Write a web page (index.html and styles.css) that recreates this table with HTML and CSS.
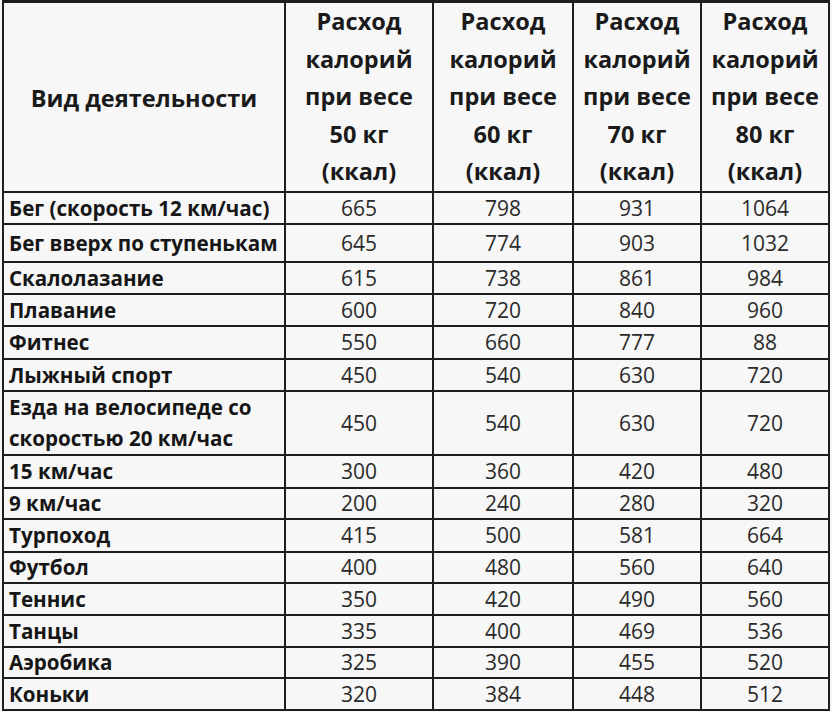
FILE: index.html
```html
<!DOCTYPE html>
<html lang="ru">
<head>
<meta charset="utf-8">
<link rel="stylesheet" href="styles.css">
<title>Расход калорий</title>
</head>
<body>
<table class="kcal">
  <colgroup>
    <col class="c-act">
    <col class="c-50">
    <col class="c-60">
    <col class="c-70">
    <col class="c-80">
  </colgroup>
  <thead>
    <tr class="head">
      <th class="h-act">Вид деятельности</th>
      <th>Расход<br>калорий<br>при весе<br>50 кг<br>(ккал)</th>
      <th>Расход<br>калорий<br>при весе<br>60 кг<br>(ккал)</th>
      <th>Расход<br>калорий<br>при весе<br>70 кг<br>(ккал)</th>
      <th>Расход<br>калорий<br>при весе<br>80 кг<br>(ккал)</th>
    </tr>
  </thead>
  <tbody>
    <tr class="r32"><td class="act">Бег (скорость 12 км/час)</td><td>665</td><td>798</td><td>931</td><td>1064</td></tr>
    <tr class="r38"><td class="act">Бег вверх по ступенькам</td><td>645</td><td>774</td><td>903</td><td>1032</td></tr>
    <tr class="r32"><td class="act">Скалолазание</td><td>615</td><td>738</td><td>861</td><td>984</td></tr>
    <tr class="r32"><td class="act">Плавание</td><td>600</td><td>720</td><td>840</td><td>960</td></tr>
    <tr class="r33"><td class="act">Фитнес</td><td>550</td><td>660</td><td>777</td><td>88</td></tr>
    <tr class="r32"><td class="act">Лыжный спорт</td><td>450</td><td>540</td><td>630</td><td>720</td></tr>
    <tr class="r63"><td class="act">Езда на велосипеде со<br>скоростью 20 км/час</td><td>450</td><td>540</td><td>630</td><td>720</td></tr>
    <tr class="r33"><td class="act">15 км/час</td><td>300</td><td>360</td><td>420</td><td>480</td></tr>
    <tr class="r31"><td class="act">9 км/час</td><td>200</td><td>240</td><td>280</td><td>320</td></tr>
    <tr class="r33"><td class="act">Турпоход</td><td>415</td><td>500</td><td>581</td><td>664</td></tr>
    <tr class="r31"><td class="act">Футбол</td><td>400</td><td>480</td><td>560</td><td>640</td></tr>
    <tr class="r32"><td class="act">Теннис</td><td>350</td><td>420</td><td>490</td><td>560</td></tr>
    <tr class="r32"><td class="act">Танцы</td><td>335</td><td>400</td><td>469</td><td>536</td></tr>
    <tr class="r31"><td class="act">Аэробика</td><td>325</td><td>390</td><td>455</td><td>520</td></tr>
    <tr class="r32"><td class="act">Коньки</td><td>320</td><td>384</td><td>448</td><td>512</td></tr>
  </tbody>
</table>
</body>
</html>
```

FILE: styles.css
```css
html, body {
  margin: 0;
  padding: 0;
  background: #f7f7f7;
}

body {
  padding: 0 0 0 2px;
  overflow: hidden;
  height: 712px;
}

.kcal {
  border-collapse: collapse;
  table-layout: fixed;
  width: 826px;
  background: #f7f7f7;
  color: #161616;
  font-family: "Open Sans", "Liberation Sans", sans-serif;
}

.c-act { width: 282px; }
.c-50 { width: 148px; }
.c-60 { width: 140px; }
.c-70 { width: 128px; }
.c-80 { width: 128px; }

.kcal th,
.kcal td {
  border: 2px solid #1e1e1e;
  padding: 0;
}

.kcal thead th {
  border-top-width: 3px;
}

.head {
  height: 186px;
}

.kcal th {
  font-size: 23.5px;
  font-weight: 700;
  line-height: 37.5px;
  text-align: center;
  vertical-align: middle;
  padding: 0;
  color: #1a1a1a;
}

.kcal th.h-act {
  padding-top: 4px;
}

.kcal td {
  font-size: 21px;
  font-weight: 400;
  color: #2a2a2a;
  text-align: center;
  vertical-align: middle;
  line-height: 26px;
}

.kcal td.act {
  text-align: left;
  font-size: 20.6px;
  font-weight: 700;
  color: #161616;
  padding-left: 5px;
  line-height: 26px;
  white-space: nowrap;
}

.r63 td.act {
  line-height: 31px;
}

.r31 { height: 31px; }
.r32 { height: 32px; }
.r33 { height: 33px; }
.r38 { height: 38px; }
.r63 { height: 63px; }
```
